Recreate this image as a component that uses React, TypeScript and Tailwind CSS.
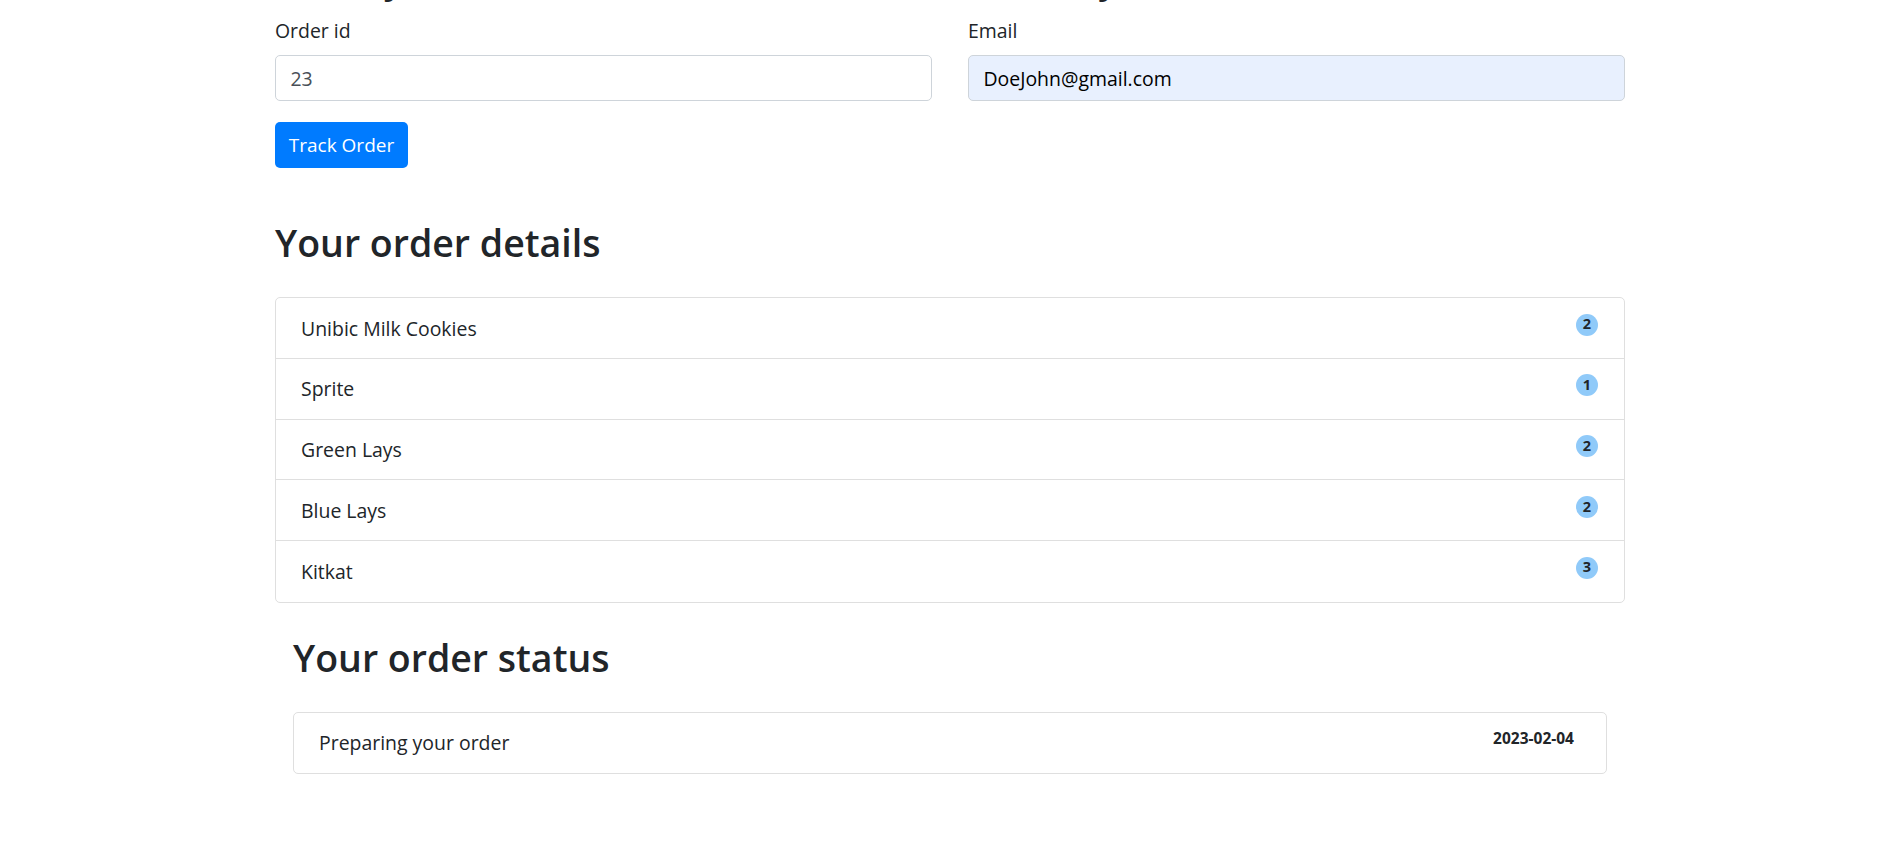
import React from "react";

const items: { name: string; qty: number }[] = [
  { name: "Unibic Milk Cookies", qty: 2 },
  { name: "Sprite", qty: 1 },
  { name: "Green Lays", qty: 2 },
  { name: "Blue Lays", qty: 2 },
  { name: "Kitkat", qty: 3 },
];

export default function App() {
  return (
    <div className="min-h-screen overflow-hidden bg-white font-['Open_Sans','Noto_Sans',sans-serif] text-[#212529]">
      <div className="ml-[275px] mt-[-45px] w-[1350px]">
        <h2 className="mb-[13px] whitespace-nowrap text-[37.5px] font-semibold leading-[48px]">
          Track your order_id and email to track delivery
        </h2>

        <div className="grid grid-cols-2 gap-x-[36px]">
          <div className="flex flex-col">
            <label className="mb-[10px] text-[19.44px] leading-[29px]">Order id</label>
            <input
              readOnly
              value="23"
              className="h-[46px] w-full rounded-[5px] border border-[#ced4da] bg-white px-[14.5px] text-[19.44px] text-[#495057] outline-none"
            />
          </div>
          <div className="flex flex-col">
            <label className="mb-[10px] text-[19.44px] leading-[29px]">Email</label>
            <input
              readOnly
              value="DoeJohn@gmail.com"
              className="h-[46px] w-full rounded-[5px] border border-[#ced4da] bg-[#e8f0fe] px-[14.5px] text-[19.44px] text-black outline-none"
            />
          </div>
        </div>

        <button className="mt-[21px] flex h-[46px] w-[133px] items-center justify-center rounded-[5px] bg-[#007bff] text-[19px] text-white">
          Track Order
        </button>

        <h2 className="mt-[51px] text-[37.5px] font-semibold leading-[48px]">Your order details</h2>

        <ul className="mt-[30px] divide-y divide-[#dfdfdf] rounded-[5px] border border-[#dfdfdf]">
          {items.map((it) => (
            <li
              key={it.name}
              className="flex h-[60.8px] items-start justify-between pl-[25px] pr-[26px] pt-[15.5px]"
            >
              <span className="text-[19.44px] leading-[29px]">{it.name}</span>
              <span className="flex h-[22px] w-[22px] items-center justify-center rounded-full bg-[#90caf9] text-[14.5px] font-bold leading-none text-[#212529]">
                {it.qty}
              </span>
            </li>
          ))}
        </ul>

        <div className="px-[18px]">
          <h2 className="mt-[31px] text-[37.5px] font-semibold leading-[48px]">Your order status</h2>
          <div className="mt-[30px] flex h-[62px] items-start justify-between rounded-[5px] border border-[#dfdfdf] pl-[25px] pr-[32px] pt-[15.5px]">
            <span className="text-[19.44px] leading-[29px]">Preparing your order</span>
            <span className="mt-[3px] text-[15.5px] font-bold leading-[15px] text-[#212529]">2023-02-04</span>
          </div>
        </div>
      </div>
    </div>
  );
}
